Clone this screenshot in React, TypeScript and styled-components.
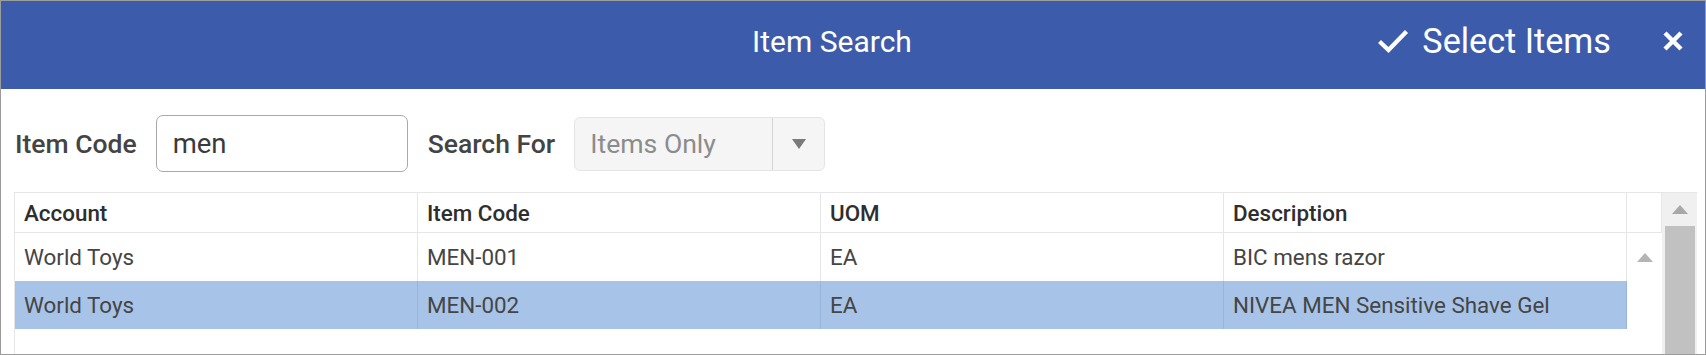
import React from "react";
import styled, { createGlobalStyle } from "styled-components";

const GlobalStyle = createGlobalStyle`
  * { box-sizing: border-box; }
  body {
    margin: 0;
    font-family: Roboto, "Noto Sans", "Liberation Sans", sans-serif;
    background: #ffffff;
  }
`;

const Dialog = styled.div`
  width: 1706px;
  height: 355px;
  border: 1px solid #9c9c9c;
  display: flex;
  flex-direction: column;
  overflow: hidden;
  background: #fff;
`;

const Header = styled.div`
  height: 88px;
  flex: none;
  background: #3c5cab;
  color: #fff;
  display: flex;
  align-items: center;
  padding-bottom: 8px;
`;

const TitleBar = styled.div`
  flex: 1;
  display: grid;
  grid-template-columns: 1fr auto 1fr;
  align-items: center;
`;

const Title = styled.div`
  font-size: 30px;
  font-weight: 400;
  white-space: nowrap;
`;

const SelectButton = styled.button`
  justify-self: end;
  margin-right: 52px;
  display: flex;
  align-items: center;
  gap: 13px;
  background: none;
  border: none;
  color: #fff;
  font-family: inherit;
  font-size: 34.2px;
  padding: 0;
  cursor: pointer;
`;

const CloseButton = styled.button`
  width: 42px;
  flex: none;
  display: flex;
  align-items: center;
  background: none;
  border: none;
  padding: 0;
  cursor: pointer;
`;

const Body = styled.div`
  flex: 1;
  display: flex;
  flex-direction: column;
  padding: 26px 8px 0 13px;
  overflow: hidden;
`;

const FilterRow = styled.div`
  display: flex;
  align-items: center;
  gap: 19px;
  height: 57px;
  flex: none;
`;

const Label = styled.label`
  font-size: 26.5px;
  font-weight: 500;
  color: #444;
  padding-left: 1px;
  white-space: nowrap;
`;

const TextInput = styled.input`
  width: 252px;
  height: 57px;
  border: 1px solid #a9a9a9;
  border-radius: 7px;
  padding: 0 16px;
  font-family: inherit;
  font-size: 27.5px;
  color: #3a3a3a;
  outline: none;
  background: #fff;
`;

const SelectBox = styled.div`
  width: 251px;
  height: 54px;
  border: 1px solid #e4e4e4;
  border-radius: 6px;
  background: #f5f5f5;
  display: flex;
  align-items: stretch;
`;

const SelectValue = styled.div`
  flex: 1;
  display: flex;
  align-items: center;
  padding-left: 15px;
  font-size: 26.6px;
  color: #8c8c8c;
`;

const SelectArrow = styled.div`
  width: 52px;
  border-left: 1px solid #d4d4d4;
  display: flex;
  align-items: center;
  justify-content: center;
`;

const TableFrame = styled.div`
  margin-top: 20px;
  flex: 1;
  display: flex;
  min-height: 0;
`;

const Grid = styled.div`
  flex: 1;
  border-top: 1px solid #e6e6e6;
  border-left: 1px solid #e6e6e6;
  display: flex;
  flex-direction: column;
`;

const Row = styled.div<{ $head?: boolean }>`
  display: grid;
  grid-template-columns: repeat(4, 1fr) 35px;
  height: ${(p) => (p.$head ? "40px" : "48px")};
  border-bottom: ${(p) => (p.$head ? "1px solid #e6e6e6" : "none")};
`;

const Cell = styled.div<{ $head?: boolean; $selected?: boolean }>`
  display: flex;
  align-items: center;
  padding-left: 9px;
  font-size: 22.4px;
  font-weight: ${(p) => (p.$head ? 500 : 400)};
  color: ${(p) => (p.$head ? "#2e2e2e" : "#454545")};
  background: ${(p) => (p.$selected ? "#a7c4e8" : "#fff")};
  border-right: 1px solid ${(p) => (p.$selected ? "#99b5db" : "#e6e6e6")};
  white-space: nowrap;
  overflow: hidden;
`;

const Gutter = styled.div<{ $head?: boolean }>`
  background: #fff;
  border-right: ${(p) => (p.$head ? "1px solid #e6e6e6" : "none")};
  display: flex;
  align-items: center;
  justify-content: center;
`;

const ScrollTrack = styled.div`
  width: 35px;
  flex: none;
  background: #f0f0f0;
  border-top: 1px solid #e6e6e6;
  display: flex;
  flex-direction: column;
  align-items: center;
`;

const ScrollArrow = styled.div`
  height: 33px;
  display: flex;
  align-items: center;
  justify-content: center;
`;

const Thumb = styled.div`
  width: 30px;
  flex: 1;
  background: #c1c1c1;
`;

const UpTriangle = ({ color = "#b5b5b5" }: { color?: string }) => (
  <svg width="16" height="9" viewBox="0 0 16 9">
    <polygon points="8,0 16,9 0,9" fill={color} />
  </svg>
);

const columns = ["Account", "Item Code", "UOM", "Description"];
const rows = [
  { account: "World Toys", code: "MEN-001", uom: "EA", desc: "BIC mens razor" },
  { account: "World Toys", code: "MEN-002", uom: "EA", desc: "NIVEA MEN Sensitive Shave Gel" },
];

export default function App() {
  return (
    <>
      <GlobalStyle />
      <Dialog>
        <Header>
          <TitleBar>
            <span />
            <Title>Item Search</Title>
            <SelectButton>
              <svg width="32" height="24" viewBox="0 0 32 24">
                <path d="M2.5 12.5 L11.5 21 L29.5 2.5" fill="none" stroke="#fff" strokeWidth="4.3" />
              </svg>
              Select Items
            </SelectButton>
          </TitleBar>
          <CloseButton aria-label="Close">
            <svg width="20" height="20" viewBox="0 0 20 20">
              <path d="M2 2 L18 18 M18 2 L2 18" stroke="#fff" strokeWidth="4.4" />
            </svg>
          </CloseButton>
        </Header>
        <Body>
          <FilterRow>
            <Label>Item Code</Label>
            <TextInput value="men" readOnly />
            <Label>Search For</Label>
            <SelectBox>
              <SelectValue>Items Only</SelectValue>
              <SelectArrow>
                <svg width="14" height="10" viewBox="0 0 14 10">
                  <polygon points="0,0 14,0 7,10" fill="#7a7a7a" />
                </svg>
              </SelectArrow>
            </SelectBox>
          </FilterRow>
          <TableFrame>
            <Grid>
              <Row $head>
                {columns.map((c) => (
                  <Cell key={c} $head>
                    {c}
                  </Cell>
                ))}
                <Gutter $head />
              </Row>
              {rows.map((r, i) => {
                const sel = i === 1;
                return (
                  <Row key={r.code}>
                    <Cell $selected={sel}>{r.account}</Cell>
                    <Cell $selected={sel}>{r.code}</Cell>
                    <Cell $selected={sel}>{r.uom}</Cell>
                    <Cell $selected={sel}>{r.desc}</Cell>
                    <Gutter>{i === 0 && <UpTriangle />}</Gutter>
                  </Row>
                );
              })}
            </Grid>
            <ScrollTrack>
              <ScrollArrow>
                <UpTriangle color="#a8a8a8" />
              </ScrollArrow>
              <Thumb />
            </ScrollTrack>
          </TableFrame>
        </Body>
      </Dialog>
    </>
  );
}
